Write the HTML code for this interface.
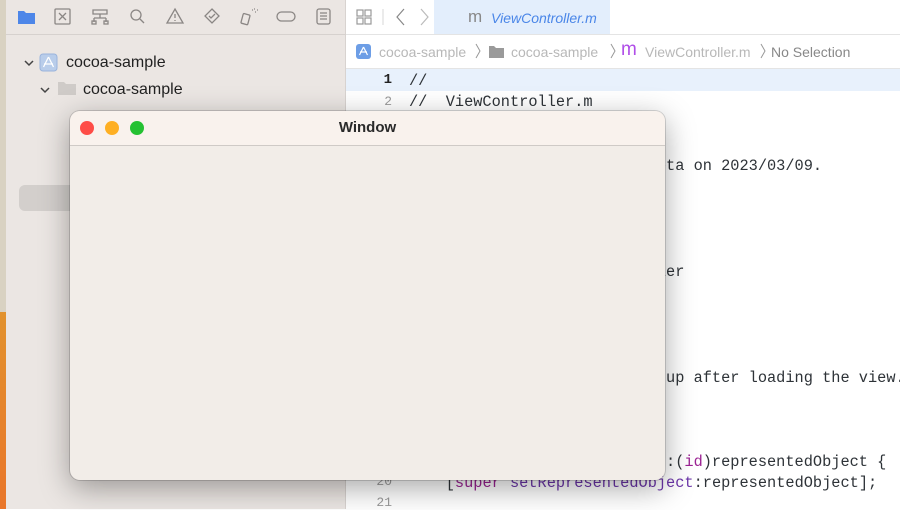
<!DOCTYPE html>
<html><head><meta charset="utf-8"><style>
*{margin:0;padding:0;box-sizing:border-box}
body{width:900px;height:509px;overflow:hidden;position:relative;background:#fff;font-family:"Liberation Sans",sans-serif}
.abs{position:absolute}
.code{font-family:"Liberation Mono",monospace;font-size:15.3px;color:#2e3338;white-space:pre}
.ln{position:absolute;left:346px;width:46px;text-align:right;font-family:"Liberation Mono",monospace;font-size:13px;color:#9a9a9a}
.cl{position:absolute;left:409px}
</style></head><body>
<div class="abs" style="left:0;top:0;width:6px;height:312px;background:#d9d2c2"></div>
<div class="abs" style="left:0;top:312px;width:6px;height:197px;background:linear-gradient(#e2922e,#e9762a)"></div>
<div class="abs" style="left:6px;top:0;width:340px;height:509px;background:#ebe6e3;border-right:1px solid #d8d3d0"></div>
<div class="abs" style="left:6px;top:34px;width:340px;height:1px;background:#d6d1ce"></div>
<svg class="abs" style="left:0;top:0" width="346" height="34" fill="none" stroke="#8a8684" stroke-width="1.3">
<path d="M18 11h6l2 2h9v11H18z" fill="#4d86e8" stroke="none"/>
<rect x="55" y="9" width="15" height="15" rx="1"/><path d="M59 13l7 7M66 13l-7 7"/>
<path d="M93 10h14v4H93zM100 14v4M94 18h12M94 18v4M106 18v4" /><rect x="92" y="21" width="4" height="3"/><rect x="104" y="21" width="4" height="3"/>
<circle cx="136" cy="15" r="5"/><path d="M140 19l4 4"/>
<path d="M175 9l8 14h-16z"/><path d="M175 14v4M175 20v1"/>
<path d="M212 9l7 7-7 7-7-7z"/><path d="M209 16l2 2 4-4"/>
<rect x="242" y="14" width="7" height="10" rx="1" transform="rotate(15 245 19)"/><path d="M252 10h1M255 12h1M254 9h1M257 10h1"/>
<rect x="277" y="12" width="18" height="9" rx="4.5"/>
<rect x="317" y="9" width="13" height="15" rx="2"/><path d="M320 13h7M320 16h7M320 19h7"/>
</svg>
<svg class="abs" style="left:0;top:52px" width="120" height="50" fill="none" stroke="#444" stroke-width="1.5">
<path d="M25 9l4 4 4-4M41 36l4 4 4-4"/>
<rect x="40" y="2" width="17" height="17" rx="3" fill="#b9cdea" stroke="#9ab4dc" stroke-width="1"/>
<path d="M48.5 5l-5 10M48.5 5l5 10M44 12h9" stroke="#fff" stroke-width="1.3"/>
<path d="M58 30h6l2 2h10v11H58z" fill="#cfcbc8" stroke="none"/>
</svg>
<div class="abs" style="left:66px;top:54px;font-size:16px;color:#222">cocoa-sample</div>
<div class="abs" style="left:83px;top:81px;font-size:16px;color:#222">cocoa-sample</div>
<div class="abs" style="left:19px;top:185px;width:60px;height:26px;border-radius:6px;background:#d3cfcc"></div>
<div class="abs" style="left:346px;top:34px;width:554px;height:1px;background:#e4e4e4"></div>
<div class="abs" style="left:434px;top:0;width:176px;height:34px;background:#e3eefc"></div>
<svg class="abs" style="left:346px;top:0" width="100" height="34" fill="none" stroke="#999" stroke-width="1.2">
<rect x="11" y="10" width="6" height="6"/><rect x="19" y="10" width="6" height="6"/><rect x="11" y="18" width="6" height="6"/><rect x="19" y="18" width="6" height="6"/>
<path d="M37 9v16" stroke="#ddd"/><path d="M58 9l-7 8 7 8" stroke="#888"/><path d="M75 9l7 8-7 8" stroke="#bbb"/>
</svg>
<div class="abs" style="left:468px;top:7px;font-size:17px;color:#888">m</div>
<div class="abs" style="left:491px;top:10px;font-size:14px;color:#4a86e8;font-style:italic">ViewController.m</div>
<div class="abs" style="left:346px;top:68px;width:554px;height:1px;background:#e4e4e4"></div>
<svg class="abs" style="left:346px;top:35px" width="554" height="33" fill="none">
<rect x="10" y="9" width="15" height="15" rx="3" fill="#6d9ee6"/><path d="M17.5 12l-4 8M17.5 12l4 8M14 17h7" stroke="#fff" stroke-width="1.2"/>
<path d="M130 9l4 7-4 7M265 9l4 7-4 7M415 9l4 7-4 7" stroke="#999" stroke-width="1"/>
<path d="M143 11h5l2 2h8v10h-15z" fill="#9a9a9a"/>
</svg>
<div class="abs" style="left:379px;top:44px;font-size:14px;color:#b8b8b8">cocoa-sample</div>
<div class="abs" style="left:511px;top:44px;font-size:14px;color:#b8b8b8">cocoa-sample</div>
<div class="abs" style="left:621px;top:39px;font-size:19px;color:#b04ee8">m</div>
<div class="abs" style="left:645px;top:44px;font-size:14px;color:#b8b8b8">ViewController.m</div>
<div class="abs" style="left:771px;top:44px;font-size:14px;color:#888">No Selection</div>
<div class="abs" style="left:346px;top:69px;width:554px;height:22px;background:#e8f1fc"></div>
<div class="ln" style="top:72px;color:#222;font-weight:bold;font-size:14px">1</div>
<div class="ln" style="top:94px">2</div>
<div class="ln" style="top:474px">20</div>
<div class="ln" style="top:495px">21</div>
<div class="code">
<div class="cl" style="top:72px">//</div>
<div class="cl" style="top:93px">//  ViewController.m</div>
<div class="cl" style="top:157px">//  Created by Jiro Yamamurota on 2023/03/09.</div>
<div class="cl" style="top:263px">@implementation ViewController</div>
<div class="cl" style="top:369px">    // Do any additional setup after loading the view.</div>
<div class="cl" style="top:453px">- (void)setRepresentedObject:(<span style="color:#9b2393">id</span>)representedObject {</div>
<div class="cl" style="top:474px">    [<span style="color:#9b2393">super</span> <span style="color:#6c36a9">setRepresentedObject</span>:representedObject];</div>
</div>
<div class="abs" style="left:70px;top:111px;width:595px;height:369px;border-radius:10px;background:#f2ede8;box-shadow:0 8px 30px rgba(0,0,0,.35),0 0 0 1px rgba(0,0,0,.15);overflow:hidden">
<div style="height:35px;background:#f9f2ed;border-bottom:1px solid #cfcac6;text-align:center;font-size:15px;font-weight:bold;color:#2a2a2a;line-height:34px">Window</div>
</div>
<div class="abs" style="left:80px;top:121px;width:14px;height:14px;border-radius:50%;background:#fe4d47"></div>
<div class="abs" style="left:105px;top:121px;width:14px;height:14px;border-radius:50%;background:#feaf23"></div>
<div class="abs" style="left:130px;top:121px;width:14px;height:14px;border-radius:50%;background:#25c132"></div>
</body></html>
